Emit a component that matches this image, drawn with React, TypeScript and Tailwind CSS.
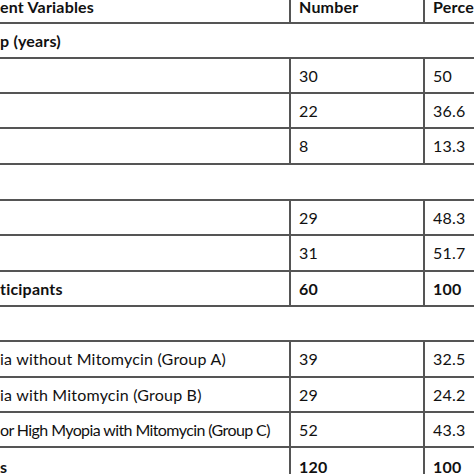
import React from "react";

type Row = {
  label: string;
  n?: string;
  p?: string;
  h: number;
  bold?: boolean;
  section?: boolean;
  tight?: boolean;
};

const rows: Row[] = [
  { label: "p (years)", h: 35, bold: true, section: true },
  { label: "", n: "30", p: "50", h: 35 },
  { label: "", n: "22", p: "36.6", h: 35 },
  { label: "", n: "8", p: "13.3", h: 36 },
  { label: "", h: 36, section: true },
  { label: "", n: "29", p: "48.3", h: 35 },
  { label: "", n: "31", p: "51.7", h: 36 },
  { label: "ticipants", n: "60", p: "100", h: 35, bold: true },
  { label: "", h: 35, section: true },
  { label: "ia without Mitomycin (Group A)", n: "39", p: "32.5", h: 36 },
  { label: "ia with Mitomycin (Group B)", n: "29", p: "24.2", h: 35 },
  { label: "or High Myopia with Mitomycin (Group C)", n: "52", p: "43.3", h: 35, tight: true },
  { label: "s", n: "120", p: "100", h: 40, bold: true },
];

export default function App() {
  return (
    <div
      className="w-[474px] h-[474px] overflow-hidden bg-white text-[#111] text-[16px] leading-none tracking-[0.2px]"
      style={{ fontFamily: "Lato, 'Open Sans', sans-serif" }}
    >
      <div className="-mt-[8px] w-[520px] flex flex-col">
        <div className="flex h-[32px] border-b-2 border-[#555] font-bold">
          <div className="w-[289px] flex items-center whitespace-nowrap">ent Variables</div>
          <div className="w-[134px] flex items-center border-l-2 border-[#555] pl-[8px]">Number</div>
          <div className="flex-1 flex items-center border-l-2 border-[#555] pl-[8px] whitespace-nowrap">Percentage</div>
        </div>
        {rows.map((r, i) => (
          <div
            key={i}
            className={`flex border-b-2 border-[#555] ${r.bold ? "font-bold" : ""}`}
            style={{ height: r.h }}
          >
            {r.section ? (
              <div className="flex-1 flex items-center whitespace-nowrap">{r.label}</div>
            ) : (
              <>
                <div
                  className={`w-[289px] flex items-center whitespace-nowrap ${r.tight ? "tracking-[-0.6px]" : ""}`}
                >
                  {r.label}
                </div>
                <div className="w-[134px] flex items-center border-l-2 border-[#555] pl-[8px]">{r.n}</div>
                <div className="flex-1 flex items-center border-l-2 border-[#555] pl-[8px]">{r.p}</div>
              </>
            )}
          </div>
        ))}
      </div>
    </div>
  );
}
